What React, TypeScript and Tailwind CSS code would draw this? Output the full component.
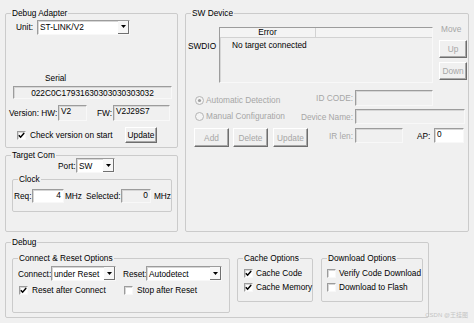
import React from 'react';

// sunken 3D edge used by edits, combos and the list view
const sunken =
  'border border-t-[#9c9c9c] border-l-[#9c9c9c] border-b-[#f8f8f8] border-r-[#f8f8f8] shadow-[inset_1px_1px_0_#d6d6d6]';
const raised =
  'border border-t-white border-l-white border-b-[#6e6e6e] border-r-[#6e6e6e] shadow-[inset_-1px_-1px_0_#a8a8a8]';

function Group({ title, className = '', children }: { title: string; className?: string; children?: React.ReactNode }) {
  return (
    <fieldset className={`border border-[#cbcbcb] rounded-[2px] min-w-0 ${className}`}>
      <legend className="ml-[5px] px-[1px] leading-[10px]">{title}</legend>
      {children}
    </fieldset>
  );
}

function Edit({ w, h, text = '', white = false, align = 'left', top = false }: { w: string; h: string; text?: string; white?: boolean; align?: 'left' | 'right' | 'center'; top?: boolean }) {
  const j = align === 'right' ? 'justify-end' : align === 'center' ? 'justify-center' : 'justify-start';
  return (
    <div className={`${sunken} ${w} ${h} ${white ? 'bg-white' : 'bg-[#f0f0f0]'} flex ${top ? 'items-start' : 'items-center'} ${j} px-[2px] shrink-0`}>
      {text}
    </div>
  );
}

function Combo({ w, text }: { w: string; text: string }) {
  return (
    <div className={`${sunken} ${w} h-[15px] bg-white flex items-center shrink-0`}>
      <span className="pl-[2px] flex-1 whitespace-nowrap overflow-hidden">{text}</span>
      <div className="w-[11px] h-full flex items-center justify-center bg-[#f7f7f7] border-r border-b border-[#707070]">
        <svg width="5" height="3" viewBox="0 0 5 3"><polygon points="0,0 5,0 2.5,3" fill="#000" /></svg>
      </div>
    </div>
  );
}

function Check({ on = false }: { on?: boolean }) {
  return (
    <span className={`${sunken} w-[9px] h-[9px] bg-white flex items-center justify-center shrink-0`}>
      {on && (
        <svg width="7" height="7" viewBox="0 0 7 7">
          <path d="M0.8 3.2 L2.6 5.2 L6.2 1" fill="none" stroke="#000" strokeWidth="1.5" />
        </svg>
      )}
    </span>
  );
}

function Radio({ on = false }: { on?: boolean }) {
  return (
    <svg width="9" height="9" viewBox="0 0 9 9" className="shrink-0">
      <circle cx="4.5" cy="4.5" r="4" fill="#f4f4f4" stroke="#b4b4b4" />
      {on && <circle cx="4.5" cy="4.5" r="1.6" fill="#a0a0a0" />}
    </svg>
  );
}

function Btn({ w, h, label, disabled = false, className = '' }: { w: string; h: string; label: string; disabled?: boolean; className?: string }) {
  return (
    <div className={`${raised} ${w} ${h} bg-[#f0f0f0] flex items-center justify-center shrink-0 ${disabled ? 'text-[#a6a6a6]' : ''} ${className}`}>
      {label}
    </div>
  );
}

export default function App() {
  return (
    <div className="relative w-[474px] h-[323px] overflow-hidden bg-[#f0f0f0] pl-[5px] pt-[8px] text-[8.3px] leading-[10px] text-black [font-family:'Liberation_Sans',Arial,sans-serif]">
      {/* ── top row ─────────────────────────── */}
      <div className="flex gap-[7px]">
        <div className="w-[173px] flex flex-col gap-[2px]">
          <Group title="Debug Adapter" className="h-[140px]">
            <div className="flex items-center mt-[2px] ml-[10px] h-[14px]">
              <span className="w-[21px]">Unit:</span>
              <Combo w="w-[93px]" text="ST-LINK/V2" />
            </div>
            <div className="mt-[39px] ml-[39px]">Serial</div>
            <div className="mt-[3px] ml-[7px]">
              <Edit w="w-[159px]" h="h-[13px]" text="022C0C17931630303030303032" align="center" />
            </div>
            <div className="flex items-center mt-[6px] ml-[3px] h-[16px]">
              <span className="w-[49px] whitespace-nowrap">Version: HW:</span>
              <Edit w="w-[29px]" h="h-[16px]" text="V2" top />
              <span className="ml-[10px] w-[16px]">FW:</span>
              <Edit w="w-[57px]" h="h-[16px]" text="V2J29S7" top />
            </div>
            <div className="flex items-center mt-[6px] h-[16px]">
              <span className="ml-[11px]"><Check on /></span>
              <span className="ml-[4px] whitespace-nowrap">Check version on start</span>
              <Btn w="w-[32px]" h="h-[16px]" label="Update" className="ml-auto mr-[20px]" />
            </div>
          </Group>

          <Group title="Target Com" className="h-[82px]">
            <div className="flex items-center -mt-[2px] ml-[52px] h-[15px]">
              <span className="w-[18px]">Port:</span>
              <Combo w="w-[39px]" text="SW" />
            </div>
            <Group title="Clock" className="mt-[1px] ml-[6px] w-[160px] h-[38px]">
              <div className="flex items-center mt-[5px] h-[14px]">
                <span className="ml-[1px] w-[18px]">Req:</span>
                <Edit w="w-[32px]" h="h-[14px]" text="4" white align="right" top />
                <span className="ml-[1px]">MHz</span>
                <span className="ml-[4px] w-[35px]">Selected:</span>
                <Edit w="w-[30px]" h="h-[14px]" text="0" align="right" top />
                <span className="ml-[3px]">MHz</span>
              </div>
            </Group>
          </Group>
        </div>

        <Group title="SW Device" className="w-[284px] h-[224px]">
          <div className="flex mt-[6px]">
            <span className="ml-[2px] w-[31px] mt-[17px]">SWDIO</span>
            <div className={`${sunken} mt-[3px] w-[214px] h-[56px] bg-[#f0f0f0] flex flex-col`}>
              <div className="flex h-[10px] border-b border-[#d2d2d2] bg-[#f4f4f4] leading-[9px]">
                <div className="w-[96px] text-center border-r border-[#d2d2d2]">Error</div>
                <div className="flex-1" />
              </div>
              <div className="pl-[12px] mt-[2px]">No target connected</div>
            </div>
            <div className="ml-[6px] flex flex-col w-[28px]">
              <span className="ml-[2px] h-[10px] text-[#a6a6a6]">Move</span>
              <Btn w="w-[28px]" h="h-[18px]" label="Up" disabled className="mt-[6px]" />
              <Btn w="w-[28px]" h="h-[18px]" label="Down" disabled className="mt-[4px]" />
            </div>
          </div>

          <div className="flex mt-[7px]">
            <div className="ml-[8px] w-[104px] flex flex-col text-[#a6a6a6]">
              <div className="flex items-center mt-[2px] h-[16px] ml-[1px] whitespace-nowrap">
                <Radio on />
                <span className="ml-[2px]">Automatic Detection</span>
              </div>
              <div className="flex items-center h-[16px] ml-[1px] whitespace-nowrap">
                <Radio />
                <span className="ml-[2px]">Manual Configuration</span>
              </div>
              <div className="flex mt-[4px] w-[114px]">
                <Btn w="w-[35px]" h="h-[19px]" label="Add" disabled />
                <Btn w="w-[35px]" h="h-[19px]" label="Delete" disabled className="ml-[4px]" />
                <Btn w="w-[35px]" h="h-[19px]" label="Update" disabled className="ml-[5px]" />
              </div>
            </div>
            <div className="flex flex-col">
              <div className="flex items-center h-[16px]">
                <span className="w-[57px] pr-[2px] text-right text-[#a6a6a6]">ID CODE:</span>
                <Edit w="w-[78px]" h="h-[16px]" />
              </div>
              <div className="flex items-center mt-[3px] h-[15px]">
                <span className="w-[57px] pr-[2px] text-right text-[#a6a6a6] whitespace-nowrap">Device Name:</span>
                <Edit w="w-[110px]" h="h-[15px]" />
              </div>
              <div className="flex items-center mt-[4px] h-[15px]">
                <span className="w-[57px] pr-[2px] text-right text-[#a6a6a6]">IR len:</span>
                <Edit w="w-[48px]" h="h-[15px]" />
                <span className="ml-[14px] w-[17px]">AP:</span>
                <Edit w="w-[30px]" h="h-[15px]" text="0" white top />
              </div>
            </div>
          </div>
        </Group>
      </div>

      {/* ── Debug ───────────────────────────── */}
      <Group title="Debug" className="mt-[5px] w-[424px] h-[81px]">
        <div className="flex mt-[6px] ml-[6px]">
          <Group title="Connect & Reset Options" className="w-[218px] h-[60px]">
            <div className="flex items-center mt-[3px] ml-[5px] h-[15px]">
              <span className="w-[33px]">Connect:</span>
              <Combo w="w-[65px]" text="under Reset" />
              <span className="ml-[7px] w-[23px]">Reset:</span>
              <Combo w="w-[76px]" text="Autodetect" />
            </div>
            <div className="flex items-center mt-[4px] h-[10px]">
              <div className="flex items-center w-[111px] pl-[6px]">
                <Check on />
                <span className="ml-[4px] whitespace-nowrap">Reset after Connect</span>
              </div>
              <Check />
              <span className="ml-[4px] whitespace-nowrap">Stop after Reset</span>
            </div>
          </Group>

          <Group title="Cache Options" className="ml-[7px] w-[76px] h-[49px]">
            <div className="flex items-center mt-[3px] h-[14px] ml-[6px]">
              <Check on />
              <span className="ml-[3px] whitespace-nowrap">Cache Code</span>
            </div>
            <div className="flex items-center h-[14px] ml-[6px]">
              <Check on />
              <span className="ml-[3px] whitespace-nowrap">Cache Memory</span>
            </div>
          </Group>

          <Group title="Download Options" className="ml-[8px] w-[102px] h-[49px]">
            <div className="flex items-center mt-[3px] h-[14px] pl-[5px] overflow-hidden">
              <Check />
              <span className="ml-[3px] whitespace-nowrap">Verify Code Download</span>
            </div>
            <div className="flex items-center h-[14px] pl-[5px] overflow-hidden">
              <Check />
              <span className="ml-[3px] whitespace-nowrap">Download to Flash</span>
            </div>
          </Group>
        </div>
      </Group>

      {/* watermark over the corner */}
      <div className="absolute right-[6px] bottom-[5px] text-[6px] leading-[6px] text-[#c4c4c4] [font-family:'Liberation_Sans','Noto_Sans_CJK_SC',sans-serif]">
        CSDN @王挂图
      </div>
    </div>
  );
}
